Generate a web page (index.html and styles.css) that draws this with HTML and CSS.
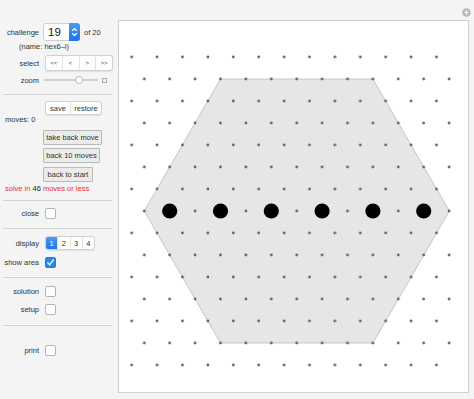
FILE: index.html
```html
<!DOCTYPE html>
<html lang="en">

<head>
    <meta charset="UTF-8">
    <meta name="viewport" content="width=device-width, initial-scale=1.0">
    <title>Hexagon Peg Challenge</title>
    <link rel="stylesheet" href="styles.css">
</head>

<body>

    <div class="app">
        <!-- Painel de controles -->
        <aside class="controls">
            <div class="row row-challenge">
                <span class="label">challenge</span>
                <div class="spin">
                    <span class="spin-value">19</span>
                    <span class="spin-stepper">
                        <svg width="7" height="12" viewBox="0 0 7 12">
                            <path d="M1.5 4.5 L3.5 2.5 L5.5 4.5 M1.5 7.5 L3.5 9.5 L5.5 7.5" fill="none" stroke="#fff" stroke-width="1.1" stroke-linecap="round" stroke-linejoin="round"/>
                        </svg>
                    </span>
                </div>
                <span class="of">of 20</span>
            </div>
            <div class="row row-name">(name: hex6&ndash;i)</div>

            <div class="row row-select">
                <span class="label">select</span>
                <div class="segmented seg-select">
                    <span>&lt;&lt;</span>
                    <span>&lt;</span>
                    <span>&gt;</span>
                    <span>&gt;&gt;</span>
                </div>
            </div>

            <div class="row row-zoom">
                <span class="label">zoom</span>
                <div class="slider">
                    <span class="slider-thumb"></span>
                </div>
                <span class="slider-box"></span>
            </div>

            <hr class="sep sep-1">

            <div class="row row-save">
                <div class="segmented seg-save">
                    <span class="save">save</span>
                    <span class="restore">restore</span>
                </div>
            </div>
            <p class="text">moves: 0</p>

            <button class="btn btn-take">take back move</button>
            <button class="btn btn-ten">back 10 moves</button>
            <button class="btn btn-start">back to start</button>

            <p class="text solve">solve in <b>46</b> moves or less</p>

            <hr class="sep sep-2">

            <div class="row row-check row-close">
                <span class="label">close</span>
                <span class="check"></span>
            </div>

            <hr class="sep sep-3">

            <div class="row row-display">
                <span class="label">display</span>
                <div class="segmented seg-display">
                    <span class="active">1</span>
                    <span>2</span>
                    <span>3</span>
                    <span>4</span>
                </div>
            </div>
            <div class="row row-check row-area">
                <span class="label">show area</span>
                <span class="check checked">
                    <svg width="9" height="9" viewBox="0 0 9 9">
                        <path d="M1.8 4.8 L3.7 6.8 L7.4 1.8" fill="none" stroke="#fff" stroke-width="1.3" stroke-linecap="round" stroke-linejoin="round"/>
                    </svg>
                </span>
            </div>

            <hr class="sep sep-4">

            <div class="row row-check row-solution">
                <span class="label">solution</span>
                <span class="check"></span>
            </div>
            <div class="row row-check row-setup">
                <span class="label">setup</span>
                <span class="check"></span>
            </div>

            <hr class="sep sep-5">

            <div class="row row-check row-print">
                <span class="label">print</span>
                <span class="check"></span>
            </div>
        </aside>

        <!-- Tabuleiro -->
        <main class="view">
            <div class="view-bar">
                <svg class="plus-icon" width="9" height="9" viewBox="0 0 9 9">
                    <circle cx="4.5" cy="4.5" r="4.3" fill="#b9b9b9"/>
                    <path d="M4.5 2.3 V6.7 M2.3 4.5 H6.7" stroke="#fff" stroke-width="1.2"/>
                </svg>
            </div>
            <div class="board">
                <svg width="349" height="371" viewBox="119 21 349 371">
                    <defs>
                        <pattern id="lattice" patternUnits="userSpaceOnUse" x="125.35" y="46" width="50.8" height="44">
                            <circle cx="6.35" cy="11" r="1.4" fill="#666"/>
                            <circle cx="31.75" cy="11" r="1.4" fill="#666"/>
                            <circle cx="18.95" cy="33" r="1.4" fill="#666"/>
                            <circle cx="44.35" cy="33" r="1.4" fill="#666"/>
                        </pattern>
                    </defs>

                    <!-- Área do hexágono -->
                    <polygon points="220.5,79 372.9,79 449.3,211 372.9,343 220.5,343 144.3,211"
                        fill="#e6e6e6" stroke="#c6c6c6" stroke-width="1"/>

                    <!-- Pontos da grade -->
                    <rect x="125.35" y="46" width="330.2" height="330" fill="url(#lattice)"/>

                    <!-- Peças -->
                    <g fill="#000">
                        <circle cx="169.7" cy="211" r="7.6"/>
                        <circle cx="220.5" cy="211" r="7.6"/>
                        <circle cx="271.3" cy="211" r="7.6"/>
                        <circle cx="322.1" cy="211" r="7.6"/>
                        <circle cx="372.9" cy="211" r="7.6"/>
                        <circle cx="423.7" cy="211" r="7.6"/>
                    </g>
                </svg>
            </div>
        </main>
    </div>

</body>

</html>
```

FILE: styles.css
```css
/* Reset básico */
* {
    margin: 0;
    padding: 0;
    box-sizing: border-box;
    font-family: "Liberation Sans", Arial, sans-serif;
}

body {
    background: #f4f4f4;
    color: #333;
    font-size: 7.5px;
    width: 474px;
    height: 399px;
    overflow: hidden;
}

.app {
    display: flex;
    height: 399px;
}

/* Painel da esquerda */
.controls {
    width: 118px;
    padding-top: 23px;
    display: flex;
    flex-direction: column;
    align-items: flex-start;
}

.row {
    display: flex;
    align-items: center;
    white-space: nowrap;
}

.label {
    width: 39px;
    text-align: right;
    flex-shrink: 0;
}

/* Challenge */
.row-challenge {
    height: 18px;
}

.spin {
    display: flex;
    width: 37px;
    height: 18px;
    margin-left: 4px;
    background: #fff;
    border: 1px solid #cfcfcf;
    border-radius: 3px;
}

.spin-value {
    flex: 1;
    font-size: 11.5px;
    color: #111;
    padding-left: 4px;
    line-height: 16px;
}

.spin-stepper {
    width: 11px;
    margin: -1px -1px -1px 0;
    background: linear-gradient(#4a9bf5, #1c74ea);
    border-radius: 0 3px 3px 0;
    display: flex;
    align-items: center;
    justify-content: center;
}

.of {
    margin-left: 4px;
}

.row-name {
    height: 10px;
    padding-left: 19px;
}

/* Botões segmentados */
.segmented {
    display: flex;
    background: #fff;
    border: 1px solid #d2d2d2;
    border-radius: 3px;
    box-shadow: 0 0.5px 1px rgba(0, 0, 0, 0.08);
    overflow: hidden;
}

.segmented span {
    display: flex;
    align-items: center;
    justify-content: center;
    border-left: 1px solid #e3e3e3;
}

.segmented span:first-child {
    border-left: none;
}

.row-select {
    height: 16px;
    margin-top: 4px;
}

.seg-select {
    margin-left: 6px;
    width: 68px;
    height: 16px;
    font-size: 6px;
}

.seg-select span {
    flex: 1;
}

/* Zoom */
.row-zoom {
    height: 12px;
    margin-top: 3px;
}

.slider {
    position: relative;
    width: 54px;
    height: 2px;
    margin-left: 5px;
    background: #cfcfcf;
    border-radius: 1px;
}

.slider-thumb {
    position: absolute;
    left: 31px;
    top: -3px;
    width: 8px;
    height: 8px;
    background: #fff;
    border: 1px solid #bdbdbd;
    border-radius: 50%;
}

.slider-box {
    width: 5px;
    height: 5px;
    margin-left: 4px;
    border: 1px solid #aaa;
    background: #f8f8f8;
}

/* Separadores */
.sep {
    border: none;
    height: 1px;
    background: #d3d3d3;
    width: 109px;
    margin-left: 3px;
}

.sep-1 { margin-top: 8px; }
.sep-2 { margin-top: 6px; }
.sep-3 { margin-top: 9px; }
.sep-4 { margin-top: 8px; }
.sep-5 { margin-top: 10px; }

/* Save / restore */
.row-save {
    height: 14px;
    margin-top: 6px;
    padding-left: 45px;
}

.seg-save {
    height: 14px;
}

.seg-save .save {
    width: 24px;
}

.seg-save .restore {
    width: 31px;
}

/* Textos soltos */
.text {
    height: 10px;
    line-height: 10px;
    padding-left: 5px;
    white-space: nowrap;
}

/* Botões cinza */
.btn {
    display: block;
    height: 15px;
    margin-left: 43px;
    padding: 0;
    background: #ebebeb;
    border: 1px solid #b9b9b9;
    border-radius: 1px;
    font-size: 7.5px;
    color: #333;
    white-space: nowrap;
    text-align: center;
}

.btn-take {
    width: 59px;
    margin-top: 5px;
}

.btn-ten {
    width: 57px;
    margin-top: 3px;
}

.btn-start {
    width: 50px;
    margin-top: 4px;
}

.solve {
    margin-top: 2px;
    color: #e8322e;
}

.solve b {
    font-weight: normal;
    color: #222;
}

/* Checkboxes */
.row-check {
    height: 12px;
}

.check {
    width: 11px;
    height: 11px;
    margin-left: 6px;
    background: #fff;
    border: 1px solid #b3b3b3;
    border-radius: 2px;
    display: flex;
    align-items: center;
    justify-content: center;
}

.check.checked {
    background: #2c87f1;
    border-color: #2278e2;
}

.row-close { margin-top: 6px; }
.row-area { margin-top: 5px; height: 14px; }
.row-solution { margin-top: 7px; }
.row-setup { margin-top: 6px; }
.row-print { margin-top: 18px; }

/* Display */
.row-display {
    height: 14px;
    margin-top: 7px;
}

.seg-display {
    margin-left: 6px;
    height: 14px;
    width: 50px;
}

.seg-display span {
    flex: 1;
}

.seg-display .active {
    background: linear-gradient(#4a9bf5, #1c74ea);
    color: #fff;
}

/* Tabuleiro */
.view {
    display: flex;
    flex-direction: column;
}

.view-bar {
    height: 20px;
    display: flex;
    justify-content: flex-end;
    align-items: center;
    padding-top: 4px;
    margin-right: -2px;
}

.board {
    width: 351px;
    height: 373px;
    background: #fff;
    border: 1px solid #cfcfcf;
}

.board svg {
    display: block;
}
```
